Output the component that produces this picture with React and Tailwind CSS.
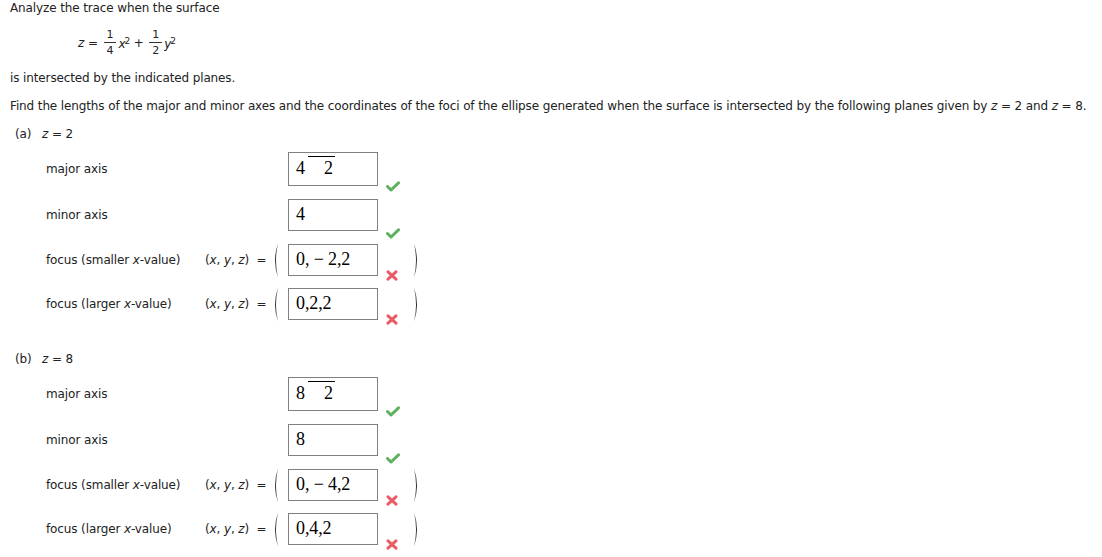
const sans = { fontFamily: '"DejaVu Sans", Verdana, sans-serif' };

const Check = () => (
  <svg width="14" height="11" viewBox="0 0 14 11">
    <path d="M1.5 5.5 L5 9 L12.5 1.8" stroke="#5eb15e" strokeWidth="3" fill="none" strokeLinecap="round" strokeLinejoin="round" />
  </svg>
);

const Cross = () => (
  <svg width="12" height="11" viewBox="0 0 12 11">
    <path d="M2 1.8 L10 9.2 M10 1.8 L2 9.2" stroke="#ea5c64" strokeWidth="3" strokeLinecap="round" />
  </svg>
);

const Paren = ({ right }) => (
  <svg width="7" height="35" viewBox="0 0 7 35" className="block">
    <path
      d={
        right
          ? 'M1 0.5 Q7 17.5 1 34.5 Q5 17.5 1 0.5 Z'
          : 'M6 0.5 Q0 17.5 6 34.5 Q2 17.5 6 0.5 Z'
      }
      fill="#333"
    />
  </svg>
);

const Frac = ({ n, d }) => (
  <span className="inline-flex flex-col items-center mx-[2px] text-[11px] leading-[12px]">
    <span className="px-[3px] pb-[1px]">{n}</span>
    <span className="border-t border-[#333] px-[3px] pt-[2px]">{d}</span>
  </span>
);

const Sqrt = ({ coef }) => (
  <span className="inline-flex items-start">
    <span>{coef}</span>
    <span className="relative inline-block ml-[3px] w-[27px] pl-[16px]">
      <span className="absolute left-0 top-[-2px] w-[27px] h-px bg-black" />
      2
    </span>
  </span>
);

const Answer = ({ children, h }) => (
  <div
    className={`${h} w-[90px] shrink-0 border border-[#808080] flex items-center pl-[7px] pb-[2px] text-[18px] leading-[20px] text-black`}
    style={{ fontFamily: '"Liberation Serif", "Times New Roman", serif' }}
  >
    {children}
  </div>
);

const Row = ({ label, answer, ok, point, h = 'h-[32px]', mt }) => (
  <div className={`flex items-center ${h} ${mt}`}>
    <div className="w-[159px] shrink-0">{label}</div>
    <div className="w-[67px] shrink-0">
      {point && (
        <span>
          (<i>x</i>, <i>y</i>, <i>z</i>)&nbsp; =
        </span>
      )}
    </div>
    <div className="w-[16px] shrink-0">{point && <Paren />}</div>
    <Answer h={h}>{answer}</Answer>
    <div className={`w-[35px] h-full shrink-0 pl-[8px] ${ok ? 'pt-[29px]' : 'pt-[26px]'}`}>
      {ok ? <Check /> : <Cross />}
    </div>
    <div>{point && <Paren right />}</div>
  </div>
);

const Part = ({ tag, z, a, b, f1, f2 }) => (
  <div>
    <div className="flex leading-[16px] pl-[5px]">
      <span className="w-[27px]">({tag})</span>
      <span>
        <i>z</i> = {z}
      </span>
    </div>
    <div className="pl-[36px] pt-[10px]">
      <Row label="major axis" answer={<Sqrt coef={a} />} ok h="h-[34px]" />
      <Row label="minor axis" answer={b} ok mt="mt-[13px]" />
      <Row
        label={<span>focus (smaller <i>x</i>-value)</span>}
        answer={f1}
        point
        mt="mt-[13px]"
      />
      <Row
        label={<span>focus (larger <i>x</i>-value)</span>}
        answer={f2}
        point
        mt="mt-[12px]"
      />
    </div>
  </div>
);

export default function App() {
  return (
    <div
      className="w-[1102px] h-[557px] bg-white text-[#222] text-[12px] tracking-[-0.12px] pl-[10px] overflow-hidden"
      style={sans}
    >
      <p className="leading-[16px]">Analyze the trace when the surface</p>
      <div className="pl-[68px] mt-[9px] h-[36px] flex items-center">
        <i>z</i>&nbsp;=&nbsp;
        <Frac n="1" d="4" />
        <span className="mt-[2px]">
          <i>x</i>
          <sup className="text-[9px] -ml-[1px]">2</sup>
        </span>
        &nbsp;+&nbsp;
        <Frac n="1" d="2" />
        <span className="mt-[2px]">
          <i>y</i>
          <sup className="text-[9px] -ml-[1px]">2</sup>
        </span>
      </div>
      <p className="leading-[16px] mt-[9px]">is intersected by the indicated planes.</p>
      <p className="leading-[16px] mt-[12px] whitespace-nowrap">
        Find the lengths of the major and minor axes and the coordinates of the foci of the ellipse generated when the surface is intersected by the following planes given by <i>z</i> = 2 and <i>z</i> = 8.
      </p>
      <div className="mt-[12px]">
        <Part tag="a" z="2" a="4" b="4" f1="0, − 2,2" f2="0,2,2" />
      </div>
      <div className="mt-[31px]">
        <Part tag="b" z="8" a="8" b="8" f1="0, − 4,2" f2="0,4,2" />
      </div>
    </div>
  );
}
